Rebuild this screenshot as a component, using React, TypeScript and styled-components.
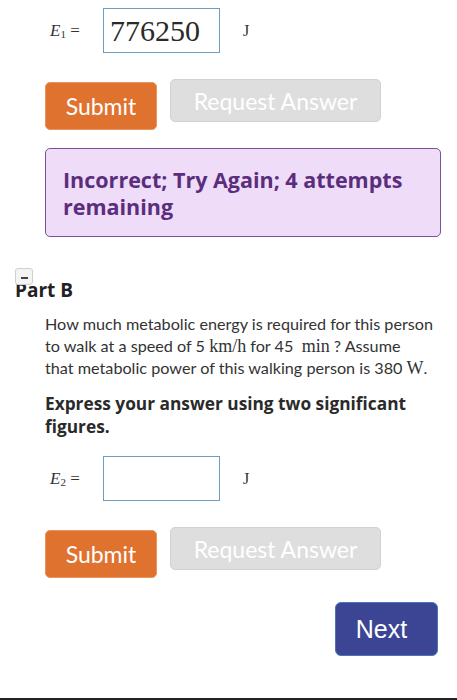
import React from "react";
import styled, { createGlobalStyle } from "styled-components";

const GlobalStyle = createGlobalStyle`
  html, body {
    margin: 0;
    padding: 0;
    background: #ffffff;
  }
  body {
    font-family: Lato, "Open Sans", sans-serif;
    color: #333333;
  }
`;

const Page = styled.div`
  width: 457px;
  height: 700px;
  box-sizing: border-box;
  padding-top: 8px;
  border-bottom: 2px solid #222222;
  overflow: hidden;
`;

const AnswerRow = styled.div<{ $top?: number }>`
  display: flex;
  align-items: center;
  padding-left: 50px;
  margin-top: ${(p) => p.$top ?? 0}px;
`;

const MathLabel = styled.span`
  font-family: "Liberation Serif", "DejaVu Serif", serif;
  font-size: 17px;
  color: #333333;
  width: 53px;

  i {
    font-style: italic;
  }
  sub {
    font-size: 11px;
    vertical-align: -2px;
  }
`;

const AnswerInput = styled.div`
  width: 117px;
  height: 45px;
  box-sizing: border-box;
  border: 1px solid #6f9dc0;
  font-family: "Liberation Serif", "DejaVu Serif", serif;
  font-size: 30px;
  color: #2a2a2a;
  padding-left: 6px;
  display: flex;
  align-items: center;
`;

const Unit = styled.span`
  font-family: "Liberation Serif", "DejaVu Serif", serif;
  font-size: 16px;
  margin-left: 23px;
  color: #333333;
`;

const ButtonRow = styled.div<{ $top: number }>`
  display: flex;
  align-items: flex-start;
  gap: 13px;
  margin: ${(p) => p.$top}px 0 0 45px;
`;

const SubmitButton = styled.button`
  width: 112px;
  height: 48px;
  margin-top: 3px;
  background: #e0722f;
  border: 1px solid #e8945f;
  border-radius: 5px;
  color: #ffffff;
  font-family: Lato, sans-serif;
  font-size: 23px;
  padding: 0;
`;

const RequestButton = styled.button`
  width: 211px;
  height: 43px;
  background: #dedede;
  border: 1px solid #d2d2d2;
  border-radius: 5px;
  color: #ffffff;
  font-family: Lato, sans-serif;
  font-size: 23px;
  padding: 0;
`;

const Feedback = styled.div`
  margin: 18px 0 0 45px;
  width: 396px;
  height: 89px;
  box-sizing: border-box;
  background: #efdcf8;
  border: 1px solid #7b5296;
  border-radius: 5px;
  padding: 17px 0 0 17px;
  color: #5a2e7c;
  font-family: "Open Sans", sans-serif;
  font-weight: 700;
  font-size: 21.5px;
  line-height: 27px;
  white-space: nowrap;
`;

const PartHeader = styled.div`
  position: relative;
  margin-top: 31px;
  padding: 9px 0 0 15px;
  font-family: "Open Sans", sans-serif;
  font-weight: 700;
  font-size: 19px;
  line-height: 26px;
  color: #222222;
  height: 25px;
`;

const Toggle = styled.span`
  position: absolute;
  left: 15px;
  top: 0;
  width: 18px;
  height: 17px;
  box-sizing: border-box;
  border: 1px solid #cfcfcf;
  border-radius: 3px;
  background: #f4f4f4;
  z-index: 1;

  &::after {
    content: "";
    position: absolute;
    left: 5px;
    top: 8px;
    width: 7px;
    height: 2px;
    background: #444444;
  }
`;

const Question = styled.p`
  margin: 11px 0 0 45px;
  font-size: 16.2px;
  line-height: 22px;
  color: #333333;
  white-space: nowrap;
`;

const Math = styled.span`
  font-family: "Liberation Serif", "DejaVu Serif", serif;
  font-size: 18px;
`;

const Instruction = styled.p`
  margin: 13px 0 0 45px;
  font-family: "Open Sans", sans-serif;
  font-size: 17.3px;
  font-weight: 700;
  line-height: 23px;
  color: #2a2a2a;
  white-space: nowrap;
`;

const NextRow = styled.div`
  display: flex;
  justify-content: flex-end;
  margin: 24px 19px 0 0;
`;

const NextButton = styled.button`
  width: 103px;
  height: 54px;
  background: #3b4594;
  border: 1px solid #4e74b8;
  border-radius: 6px;
  color: #ffffff;
  font-family: "Liberation Sans", Arial, sans-serif;
  font-size: 25px;
  padding: 0 10px 0 0;
`;

function Answer({ sub, value, top }: { sub: string; value?: string; top?: number }) {
  return (
    <AnswerRow $top={top}>
      <MathLabel>
        <i>E</i>
        <sub>{sub}</sub> =
      </MathLabel>
      <AnswerInput>{value}</AnswerInput>
      <Unit>J</Unit>
    </AnswerRow>
  );
}

function Actions({ top }: { top: number }) {
  return (
    <ButtonRow $top={top}>
      <SubmitButton>Submit</SubmitButton>
      <RequestButton>Request Answer</RequestButton>
    </ButtonRow>
  );
}

export default function App() {
  return (
    <Page>
      <GlobalStyle />
      <Answer sub="1" value="776250" />
      <Actions top={26} />
      <Feedback>
        Incorrect; Try Again; 4 attempts
        <br />
        remaining
      </Feedback>

      <PartHeader>
        <Toggle />
        Part B
      </PartHeader>

      <Question>
        How much metabolic energy is required for this person
        <br />
        to walk at a speed of 5 <Math>km/h</Math> for 45 &nbsp;<Math>min</Math> ? Assume
        <br />
        that metabolic power of this walking person is 380 <Math>W</Math>.
      </Question>
      <Instruction>
        Express your answer using two significant
        <br />
        figures.
      </Instruction>

      <Answer sub="2" top={18} />
      <Actions top={26} />

      <NextRow>
        <NextButton>Next</NextButton>
      </NextRow>
    </Page>
  );
}
